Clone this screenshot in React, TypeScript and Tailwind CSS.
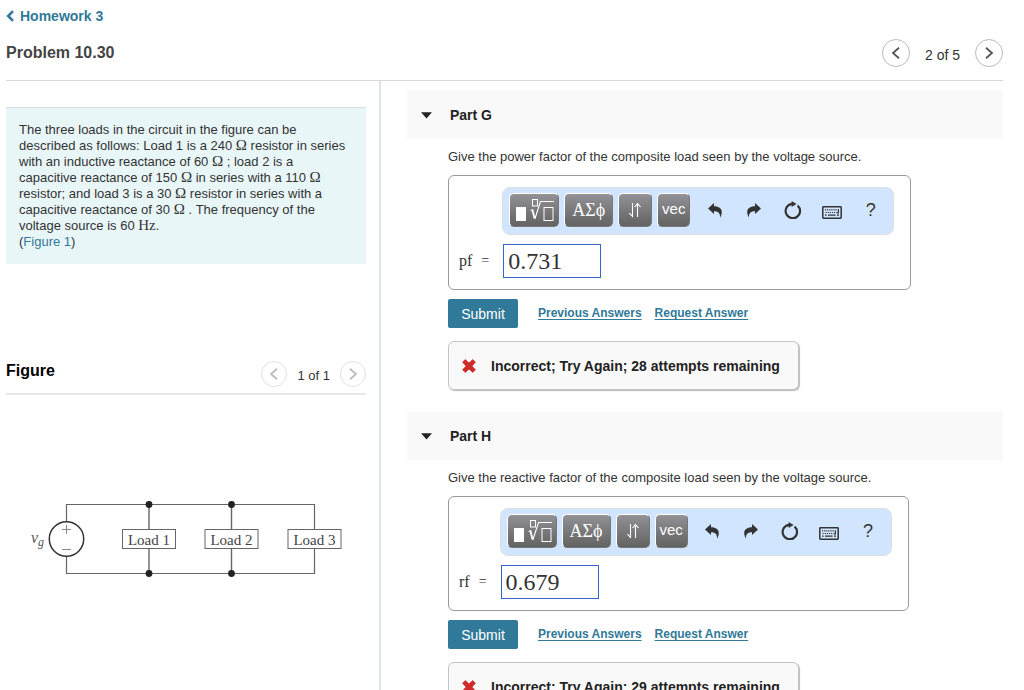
const SERIF = "font-['Liberation_Serif',serif]"

function Ohm() {
  return <span className={`${SERIF} text-[15px] leading-none`}>Ω</span>
}

function Chevron({ flip = false }: { flip?: boolean }) {
  return (
    <svg viewBox="0 0 12 12" className="size-3" fill="none" stroke="currentColor" strokeWidth="1.8" aria-hidden="true">
      <path d={flip ? 'M3 0.8 L9 6 L3 11.2' : 'M9 0.8 L3 6 L9 11.2'} />
    </svg>
  )
}

function BackIcon() {
  return (
    <svg viewBox="0 0 10 12" className="w-2.5 h-3" fill="none" stroke="currentColor" strokeWidth="2.6" aria-hidden="true">
      <path d="M7 1.2 L2.2 6 L7 10.8" />
    </svg>
  )
}

function UndoIcon({ flip = false }: { flip?: boolean }) {
  return (
    <svg viewBox="0 0 14 15" className={flip ? 'w-3.5 h-[15px] -scale-x-100' : 'w-3.5 h-[15px]'} fill="currentColor" aria-hidden="true">
      <path d="M0 5.5 L6 0 V3.2 C11 3.2 14 5.6 13.8 9.2 C13.7 11.8 12.6 13.6 12.1 14.8 C12.2 10.6 11 8.2 6 8.2 V11 Z" />
    </svg>
  )
}

function ResetIcon() {
  return (
    <svg viewBox="0 0 18 18" className="size-[18px]" aria-hidden="true">
      <path d="M13.6 4.6 A7.2 7.2 0 1 1 8.4 2.8" fill="none" stroke="currentColor" strokeWidth="2.2" />
      <path d="M7.6 0 L12.6 2.9 L7.6 6 Z" fill="currentColor" />
    </svg>
  )
}

function KeyboardIcon() {
  return (
    <svg viewBox="0 0 20 13" className="w-5 h-[13px]" fill="none" stroke="currentColor" aria-hidden="true">
      <rect x="0.8" y="0.8" width="18.4" height="11.4" rx="0.6" strokeWidth="1.5" />
      <path d="M3 3.9 H15" strokeWidth="1.2" strokeDasharray="1.2 0.9" />
      <path d="M3.6 6.5 H14.4" strokeWidth="1.2" strokeDasharray="1.2 0.9" />
      <path d="M3 9.2 H4.6 M6 9.2 H13.6 M15 9.2 H17" strokeWidth="1.2" />
      <path d="M16.4 3.2 V6.8 H14.6" strokeWidth="1.2" />
    </svg>
  )
}

function RootIcon() {
  return (
    <svg viewBox="-2 0 40 24" className="w-10 h-6" fill="none" stroke="currentColor" aria-hidden="true">
      <rect x="0" y="9" width="10" height="14" fill="currentColor" stroke="none" />
      <rect x="16.5" y="1.5" width="5" height="6.5" strokeWidth="1" />
      <path d="M14.5 12.5 L16.6 11.5" strokeWidth="1" />
      <path d="M16.3 11.5 L18.6 20.5" strokeWidth="1.8" />
      <path d="M18.8 21 L24.5 3.5 H38" strokeWidth="1.1" />
      <rect x="28" y="9.5" width="9" height="13" strokeWidth="1" />
    </svg>
  )
}

function SwapIcon() {
  return (
    <svg viewBox="0 0 14 16" className="w-3.5 h-4" fill="none" stroke="currentColor" strokeWidth="1.1" aria-hidden="true">
      <path d="M4.5 1 V14.4 M1.4 11.2 L4.5 14.4 V11" />
      <path d="M9.5 15 V1.6 M6.6 5 L9.5 1.6 L12.6 5" />
    </svg>
  )
}

function CrossIcon() {
  return (
    <svg viewBox="0 0 14 14" className="size-3.5 shrink-0" fill="#cf2a2a" stroke="#cf2a2a" strokeWidth="0.8" strokeLinejoin="round" aria-hidden="true">
      <path d="M3.2 0.6 L7 4 L10.8 0.6 L13.4 3.2 L9.9 7 L13.4 10.8 L10.8 13.4 L7 10 L3.2 13.4 L0.6 10.8 L4.1 7 L0.6 3.2 Z" />
    </svg>
  )
}

const keyClass =
  'flex items-center justify-center h-[34px] rounded-[5px] border border-t-white border-l-white border-r-[#777] border-b-[#777] bg-linear-to-b from-[#929297] to-[#636363] text-white'
const toolClass = 'flex items-center justify-center w-[39px] h-[34px] text-[#333]'

function Toolbar() {
  return (
    <div className="flex items-center h-12 pl-1.5 pr-[3px] pb-0.5 rounded-lg border border-[#dcdfe3] bg-[#d2e5fe]">
      <div className="flex gap-[5px] mr-[5px]">
        <button type="button" aria-label="Templates" className={`${keyClass} w-[50px]`}><RootIcon /></button>
        <button type="button" aria-label="Symbols" className={`${keyClass} ${SERIF} w-[49px] text-[18px]`}>ΑΣϕ</button>
        <button type="button" aria-label="Subscript and superscript" className={`${keyClass} w-[34px]`}><SwapIcon /></button>
        <button type="button" className={`${keyClass} w-[33px] pb-0.5 text-[15px]`}>vec</button>
      </div>
      <button type="button" aria-label="Undo" className={toolClass}><UndoIcon /></button>
      <button type="button" aria-label="Redo" className={toolClass}><UndoIcon flip /></button>
      <button type="button" aria-label="Reset" className={toolClass}><ResetIcon /></button>
      <button type="button" aria-label="Keyboard shortcuts" className={`${toolClass} pt-1`}><KeyboardIcon /></button>
      <button type="button" className={`${toolClass} text-[18px]`}>?</button>
    </div>
  )
}

type PartProps = { name: string; question: string; symbol: string; answer: string; attempts: number }

function Part({ name, question, symbol, answer, attempts }: PartProps) {
  return (
    <section className="mb-[22px]">
      <h2 className="bg-[#f9f9f9] text-sm font-bold text-[#222]">
        <button type="button" className="flex items-center w-full h-12 pl-3.5">
          <svg viewBox="0 0 11 7" className="w-[11px] h-[7px] mr-[18px]" fill="currentColor" aria-hidden="true">
            <path d="M0 0.3 H11 L5.5 6.5 Z" />
          </svg>
          {name}
        </button>
      </h2>
      <form className="pl-[41px]" onSubmit={(e) => e.preventDefault()}>
        <p className="py-2.5 text-[13px] leading-4">{question}</p>
        <div className="grid grid-cols-[auto_auto] w-fit gap-y-[9px] pl-2.5 pr-4 py-[11px] rounded-md border border-[#999]">
          <div className="col-start-2"><Toolbar /></div>
          <label htmlFor={symbol} className={`${SERIF} flex items-center gap-[9px] pr-[13px] text-base`}>
            {symbol} <span className="text-sm">=</span>
          </label>
          <input
            id={symbol}
            defaultValue={answer}
            className={`${SERIF} w-[98px] h-[34px] ml-px px-1 border border-[#3366cc] text-2xl outline-none`}
          />
        </div>
        <div className="flex items-start mt-[9px] text-xs font-bold text-[#307998]">
          <button type="submit" className="w-[70px] h-[29px] mr-5 rounded-xs bg-[#307998] text-sm font-normal text-white">Submit</button>
          <a href="#previous" className="mr-[13px] mt-[5px] leading-[18px] underline underline-offset-2">Previous Answers</a>
          <a href="#request" className="mt-[5px] leading-[18px] underline underline-offset-2">Request Answer</a>
        </div>
        <div className="flex items-center w-fit h-[49px] mt-[13px] pl-[13px] pr-[18px] gap-[15px] rounded-md border border-[#c4c4c4] bg-[#f9f9f9] text-sm font-bold text-[#222] shadow-[1px_1px_1px_#bbb]">
          <CrossIcon />
          <p>Incorrect; Try Again; {attempts} attempts remaining</p>
        </div>
      </form>
    </section>
  )
}

function Circuit() {
  return (
    <svg viewBox="0 0 320 80" className="w-80 h-20 ml-[22px]" fill="none" stroke="#666" role="img" aria-label="Voltage source with three parallel loads">
      <path d="M38.5 22 V5.5 H286.5 V74.5 H38.5 V56" strokeWidth="1.2" />
      <path d="M121 5 V75 M203.5 5 V75" strokeWidth="1.4" />
      <circle cx="38.5" cy="40" r="17.2" fill="#fff" stroke="#333" strokeWidth="1.5" />
      <path d="M34 30.5 H43 M38.5 26 V35 M34 50.5 H43" stroke="#888" strokeWidth="1" />
      {[121, 203.5].map((x) => (
        <g key={x} fill="#222" stroke="none">
          <circle cx={x} cy="5.5" r="3.4" />
          <circle cx={x} cy="74.5" r="3.4" />
        </g>
      ))}
      {[121, 203.5, 286.5].map((x, i) => (
        <g key={x}>
          <rect x={x - 26.5} y="30.5" width="53" height="19" fill="#fff" />
          <text x={x} y="46" textAnchor="middle" fill="#444" stroke="none" fontSize="15" className={SERIF}>Load {i + 1}</text>
        </g>
      ))}
      <text x="3" y="44" fill="#555" stroke="none" fontSize="16" fontStyle="italic" className={SERIF}>v</text>
      <text x="10" y="47" fill="#555" stroke="none" fontSize="12" fontStyle="italic" className={SERIF}>g</text>
    </svg>
  )
}

export default function App() {
  return (
    <div className="flex flex-col h-screen overflow-hidden bg-white font-['Liberation_Sans',sans-serif] text-[#333]">
      <header className="pl-1.5 pr-[21px]">
        <a href="#homework" className="flex items-center h-8 w-fit gap-1 text-sm font-bold text-[#307998]">
          <BackIcon /> Homework 3
        </a>
        <div className="flex items-center justify-between h-[49px] pb-1.5 border-b border-[#d8d8d8]">
          <h1 className="text-base font-bold text-[#444]">Problem 10.30</h1>
          <nav aria-label="Problems" className="flex items-center gap-[15px] text-sm">
            <button aria-label="Previous problem" className="flex items-center justify-center size-7 rounded-full border border-[#bbb] text-[#555]"><Chevron /></button>
            <span className="pt-1">2 of 5</span>
            <button aria-label="Next problem" className="flex items-center justify-center size-7 rounded-full border border-[#bbb] text-[#555]"><Chevron flip /></button>
          </nav>
        </div>
      </header>

      <div className="flex flex-1 min-h-0">
        <aside className="w-[381px] shrink-0 pl-1.5 pr-[13px] pt-[26px] border-r-2 border-[#dde3ec]">
          <div className="h-[157px] px-[13px] pt-3.5 border-t border-[#d3dfe1] bg-[#e9f6f8] text-[13px] leading-4">
            <p>
              The three loads in the circuit in the figure can be described as follows: Load 1 is a 240 <Ohm /> resistor in
              series with an inductive reactance of 60 <Ohm /> ; load 2 is a<br />
              capacitive reactance of 150 <Ohm /> in series with a 110 <Ohm /> resistor; and load 3 is a 30 <Ohm /> resistor
              in series with a<br />
              capacitive reactance of 30 <Ohm /> . The frequency of the<br />
              voltage source is 60 <span className={`${SERIF} text-[15px] leading-none`}>Hz</span>.
            </p>
            <p>(<a href="#figure" className="text-[#307998]">Figure 1</a>)</p>
          </div>

          <div id="figure" className="flex items-start justify-between h-[34px] mt-[97px] border-b-2 border-[#e8e8e8]">
            <h2 className="text-base leading-5 font-bold text-black">Figure</h2>
            <div className="flex items-center gap-2.5 text-[13px]">
              <button aria-label="Previous figure" disabled className="flex items-center justify-center size-[26px] rounded-full border border-[#e2e2e2] text-[#bbb]"><Chevron /></button>
              <span className="pt-1">1 of 1</span>
              <button aria-label="Next figure" disabled className="flex items-center justify-center size-[26px] rounded-full border border-[#e2e2e2] text-[#bbb]"><Chevron flip /></button>
            </div>
          </div>
          <div className="pt-[104px]"><Circuit /></div>
        </aside>

        <main className="flex-1 min-w-0 overflow-hidden pl-[26px] pr-[21px] pt-2.5">
          <Part name="Part G" question="Give the power factor of the composite load seen by the voltage source." symbol="pf" answer="0.731" attempts={28} />
          <Part name="Part H" question="Give the reactive factor of the composite load seen by the voltage source." symbol="rf" answer="0.679" attempts={29} />
        </main>
      </div>
    </div>
  )
}
